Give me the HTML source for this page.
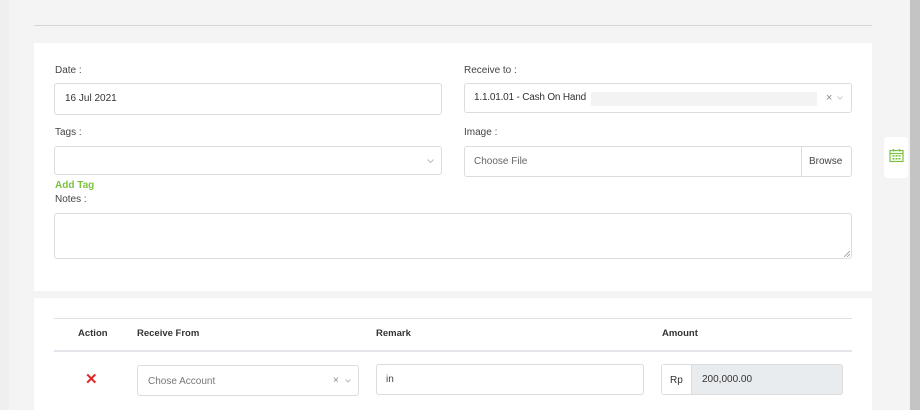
<!DOCTYPE html>
<html><head><meta charset="utf-8"><style>
*{box-sizing:border-box;margin:0;padding:0}
body{width:920px;height:410px;overflow:hidden;background:#f4f4f4;font-family:"Liberation Sans",sans-serif;font-size:10px;color:#333;position:relative}
.a{position:absolute}
.card{position:absolute;background:#fff;left:34px;width:838px}
.lbl{position:absolute;font-size:10px;color:#444}
.inp{position:absolute;border:1px solid #dcdcdc;border-radius:3px;background:#fff;font-size:10px;color:#333}
</style></head><body>
<div class="a" style="left:0;top:0;width:9px;height:410px;background:#efefef"></div>
<div class="a" style="left:34px;top:25px;width:838px;height:1px;background:#d6d6d6"></div>
<div class="a" style="left:910px;top:0;width:10px;height:410px;background:#c4c4c4"></div>
<div class="a" style="left:884px;top:137px;width:24px;height:41px;background:#fff;border-radius:3px"></div>
<svg class="a" style="left:889px;top:148px" width="15" height="15" viewBox="0 0 15 15"><rect x="1" y="2.5" width="13" height="11" fill="none" stroke="#7cc241" stroke-width="1.2"/><line x1="1" y1="5.5" x2="14" y2="5.5" stroke="#7cc241" stroke-width="1.2"/><line x1="4.5" y1="1" x2="4.5" y2="3.5" stroke="#7cc241" stroke-width="1.2"/><line x1="10.5" y1="1" x2="10.5" y2="3.5" stroke="#7cc241" stroke-width="1.2"/><g fill="#7cc241"><rect x="3.5" y="7" width="2" height="1.6"/><rect x="6.5" y="7" width="2" height="1.6"/><rect x="9.5" y="7" width="2" height="1.6"/><rect x="3.5" y="10" width="2" height="1.6"/><rect x="6.5" y="10" width="2" height="1.6"/><rect x="9.5" y="10" width="2" height="1.6"/></g></svg>

<div class="card" style="top:43px;height:248px"></div>
<div class="lbl" style="left:55px;top:65px">Date :</div>
<div class="inp" style="left:54px;top:83px;width:388px;height:32px;padding:9px 10px">16 Jul 2021</div>
<div class="lbl" style="left:55px;top:127px">Tags :</div>
<div class="inp" style="left:54px;top:146px;width:388px;height:29px"><svg class="a" style="left:372px;top:12px" width="7" height="5"><path d="M0.5 0.5L3.5 3.5L6.5 0.5" fill="none" stroke="#bbb"/></svg></div>
<div class="a" style="left:55px;top:180px;color:#7cc241;font-weight:bold;font-size:10px">Add Tag</div>
<div class="lbl" style="left:55px;top:194px">Notes :</div>
<div class="inp" style="left:54px;top:213px;width:798px;height:46px"><svg class="a" style="right:1px;bottom:1px" width="6" height="6"><path d="M6 0L0 6M6 3L3 6" stroke="#999" stroke-width="0.8"/></svg></div>

<div class="lbl" style="left:464px;top:65px">Receive to :</div>
<div class="inp" style="left:464px;top:83px;width:388px;height:30px">
<div class="a" style="left:126px;top:8px;width:226px;height:14px;background:#f3f3f3"></div>
<span class="a" style="left:9px;top:8px;letter-spacing:-0.2px">1.1.01.01 - Cash On Hand</span>
<span class="a" style="left:361px;top:8px;color:#888;font-size:11px">×</span><svg class="a" style="left:372px;top:12px" width="6" height="4"><path d="M0.5 0.5L3 3L5.5 0.5" fill="none" stroke="#ccc"/></svg></div>
<div class="lbl" style="left:464px;top:127px">Image :</div>
<div class="inp" style="left:464px;top:146px;width:388px;height:31px;padding:9px 9px;color:#666">Choose File
<div class="a" style="left:336px;top:0;width:51px;height:29px;border-left:1px solid #dcdcdc;padding:9px 7px;color:#444">Browse</div></div>

<div class="card" style="top:298px;height:112px"></div>
<div class="a" style="left:54px;top:318px;width:798px;height:1px;background:#e2e2e2"></div>
<div class="a" style="left:54px;top:350px;width:798px;height:2px;background:#e4e4ea"></div>
<div class="a" style="left:78px;top:328px;font-weight:bold;font-size:9.5px;color:#333">Action</div>
<div class="a" style="left:137px;top:328px;font-weight:bold;font-size:9.5px;color:#333">Receive From</div>
<div class="a" style="left:376px;top:328px;font-weight:bold;font-size:9.5px;color:#333">Remark</div>
<div class="a" style="left:662px;top:328px;font-weight:bold;font-size:9.5px;color:#333">Amount</div>
<div class="a" style="left:85px;top:370px;color:#e02a2a;font-size:15px;font-weight:bold">✕</div>
<div class="inp" style="left:137px;top:365px;width:222px;height:31px;padding:10px 10px;color:#777">Chose Account<span class="a" style="left:195px;top:9px;color:#888">×</span><svg class="a" style="left:207px;top:13px" width="6" height="4"><path d="M0.5 0.5L3 3L5.5 0.5" fill="none" stroke="#bbb"/></svg></div>
<div class="inp" style="left:376px;top:364px;width:268px;height:31px;padding:9px 9px;color:#444">in</div>
<div class="inp" style="left:661px;top:364px;width:182px;height:31px;background:#e9ecef">
<div class="a" style="left:0;top:0;width:30px;height:29px;background:#fff;border-right:1px solid #dcdcdc;padding:10px 8px">Rp</div>
<span class="a" style="left:40px;top:9px">200,000.00</span></div>
</body></html>
